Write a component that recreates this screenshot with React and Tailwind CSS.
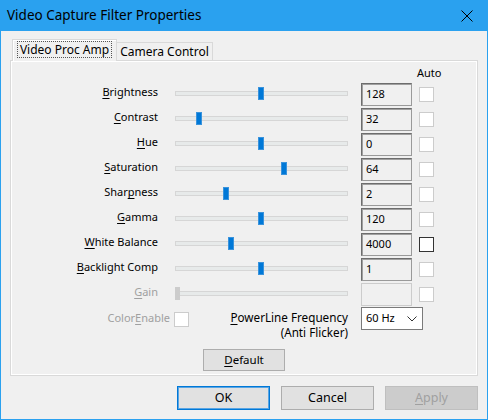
import React from "react";

const rows = [
  { pre: "", acc: "B", post: "rightness", value: "128", pos: 83 },
  { pre: "", acc: "C", post: "ontrast", value: "32", pos: 21 },
  { pre: "", acc: "H", post: "ue", value: "0", pos: 83 },
  { pre: "", acc: "S", post: "aturation", value: "64", pos: 106 },
  { pre: "Shar", acc: "p", post: "ness", value: "2", pos: 48 },
  { pre: "", acc: "G", post: "amma", value: "120", pos: 83 },
  { pre: "", acc: "W", post: "hite Balance", value: "4000", pos: 53, focus: true },
  { pre: "", acc: "B", post: "acklight Comp", value: "1", pos: 83 },
  { pre: "", acc: "G", post: "ain", value: "", pos: 0, disabled: true },
];

function Row({ r }) {
  return (
    <div className="flex items-start h-[25px]">
      <div
        className={
          "w-[147px] h-[19px] flex items-center justify-end text-[11px] " +
          (r.disabled ? "text-[#a0a0a0]" : "text-black")
        }
      >
        <span>
          {r.pre}
          <u className="underline-offset-[2px]">{r.acc}</u>
          {r.post}
        </span>
      </div>
      <div className="ml-[17px] w-[173px] h-[23px] relative">
        <div className="mt-[8px] h-[5px] bg-[#e7eaea] border border-[#d6d6d6]" />
        <div
          className={
            "absolute top-[4px] h-[13px] " +
            (r.disabled
              ? "w-[5px] bg-[#cccccc]"
              : "w-[6px] bg-[#0078d7] border border-[#3a93dc]")
          }
          style={{ left: r.pos }}
        />
      </div>
      <div
        className={
          "ml-[13px] w-[51px] h-[23px] flex items-center pl-[4px] text-[11px] bg-[#f0f0f0] " +
          (r.disabled
            ? "border border-[#cccccc]"
            : "border border-t-[#6d6d6d] border-l-[#6d6d6d] border-r-[#9a9a9a] border-b-[#9a9a9a] shadow-[inset_1px_1px_0_#a0a0a0]")
        }
      >
        {r.value}
      </div>
      <div
        className={
          "ml-[7px] mt-[4px] w-[15px] h-[15px] bg-white border " +
          (r.focus ? "border-[#333333]" : "border-[#cccccc]")
        }
      />
    </div>
  );
}

export default function App() {
  return (
    <div
      className="w-[488px] h-[420px] bg-[#f0f0f0] border-l border-r border-b border-[#2aa1ef] flex flex-col text-black"
      style={{ fontFamily: '"Noto Sans", sans-serif' }}
    >
      <div className="h-[31px] shrink-0 bg-[#2aa1ef] flex items-center justify-between pl-[6px] pr-[14px]">
        <span className="text-[13.5px] leading-none">Video Capture Filter Properties</span>
        <svg width="12" height="12" viewBox="0 0 12 12">
          <path d="M0.5 0.5 L11.5 11.5 M11.5 0.5 L0.5 11.5" stroke="#000" strokeWidth="1" />
        </svg>
      </div>
      <div className="flex-1 flex flex-col px-[9px] pt-[8px]">
        <div className="flex items-end h-[21px] relative z-10">
          <div className="ml-[2px] w-[105px] h-[22px] -mb-px bg-[#f0f0f0] border border-b-0 border-[#d9d9d9] shadow-[inset_1px_1px_0_#ffffff] flex items-start justify-center pt-[2px]">
            <span className="text-[12px] leading-[15px] px-[2px] outline outline-1 outline-dotted outline-[#555]">
              Video Proc Amp
            </span>
          </div>
          <div className="w-[96px] h-[18px] border border-l-0 border-b-0 border-[#d9d9d9] bg-[#f0f0f0] flex items-center justify-center text-[12px] leading-none">
            Camera Control
          </div>
        </div>
        <div className="h-[316px] border border-[#d9d9d9] shadow-[inset_1px_1px_0_#ffffff,inset_-1px_-1px_0_#ffffff] flex flex-col">
          <div className="h-[22px] flex items-center">
            <span className="ml-[406px] text-[11px] leading-none">Auto</span>
          </div>
          {rows.map((r, i) => (
            <Row key={i} r={r} />
          ))}
          <div className="flex items-start h-[23px] -mt-px">
            <div className="w-[163px] h-[22px] flex items-center justify-end pr-[4px] text-[11px] text-[#a0a0a0]">
              <span>
                Color<u className="underline-offset-[2px]">E</u>nable
              </span>
            </div>
            <div className="mt-[5px] w-[15px] h-[15px] bg-white border border-[#cccccc]" />
            <div className="w-[159px] mt-[3px] text-right text-[11.7px] leading-[15px]">
              <div>
                <u className="underline-offset-[2px]">P</u>owerLine Frequency
              </div>
              <div>(Anti Flicker)</div>
            </div>
            <div className="ml-[13px] w-[62px] h-[23px] bg-white border border-[#7a7a7a] flex items-center justify-between pl-[4px] pr-[5px] text-[11px]">
              <span>60 Hz</span>
              <svg width="10" height="6" viewBox="0 0 10 6">
                <path d="M0.5 0.5 L5 5 L9.5 0.5" fill="none" stroke="#333" strokeWidth="1" />
              </svg>
            </div>
          </div>
          <div className="ml-[192px] mt-[19px] w-[82px] h-[22px] bg-[#e1e1e1] border border-[#adadad] flex items-center justify-center text-[11.5px]">
            <span>
              <u className="underline-offset-[2px]">D</u>efault
            </span>
          </div>
        </div>
        <div className="mt-[10px] flex justify-end gap-[11px]">
          <div className="w-[93px] h-[24px] bg-[#e1e1e1] border border-[#0078d7] shadow-[inset_0_0_0_1px_#5aa5e3] flex items-center justify-center text-[12.5px]">
            OK
          </div>
          <div className="w-[93px] h-[24px] bg-[#e1e1e1] border border-[#adadad] flex items-center justify-center text-[12.5px]">
            Cancel
          </div>
          <div className="w-[93px] h-[24px] bg-[#cccccc] border border-[#bfbfbf] flex items-center justify-center text-[12.5px] text-[#a0a0a0]">
            <span>
              <u className="underline-offset-[2px]">A</u>pply
            </span>
          </div>
        </div>
      </div>
    </div>
  );
}
